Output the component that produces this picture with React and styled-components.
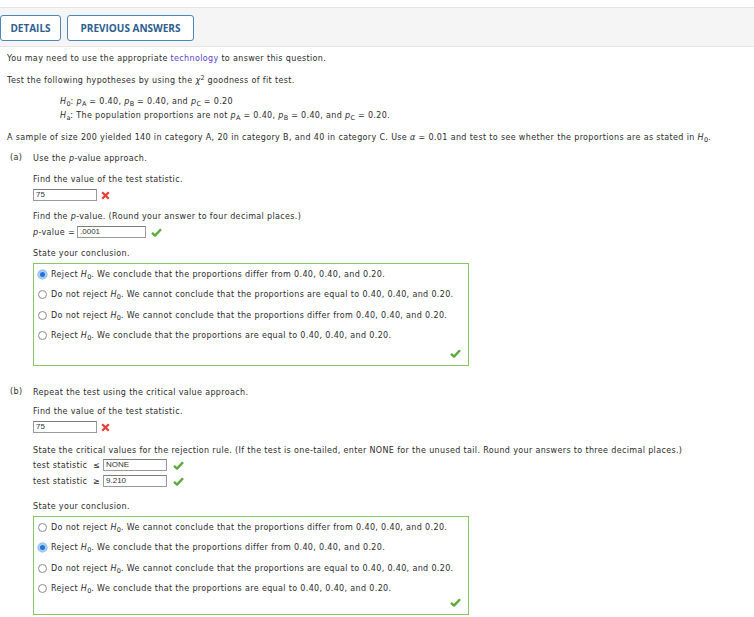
import React from "react";
import styled, { createGlobalStyle } from "styled-components";

const GlobalStyle = createGlobalStyle`
  html, body { margin: 0; padding: 0; background: #fff; }
  body {
    font-family: "DejaVu Sans", Verdana, sans-serif;
    font-size: 8px;
    letter-spacing: 0.35px;
    color: #2b2b2b;
  }
`;

const Page = styled.div`
  width: 754px;
  height: 617px;
  overflow: hidden;
  padding-top: 7px;
  box-sizing: border-box;
`;

const TopBar = styled.div`
  height: 38px;
  background: #f5f5f5;
  border-top: 1px solid #e6e6e6;
  border-bottom: 1px solid #e6e6e6;
  display: flex;
  align-items: center;
  gap: 6px;
  padding-left: 0;
`;

const TabButton = styled.button`
  height: 26px;
  width: ${(p) => p.$w}px;
  background: #fff;
  border: 1px solid #4b87b9;
  border-radius: 3px;
  font-family: "Open Sans", "DejaVu Sans", sans-serif;
  font-weight: 700;
  font-size: 10px;
  letter-spacing: 0;
  color: #2d5e8e;
  padding: 0;
  margin-top: 1px;
`;

const Content = styled.div`
  padding: 5px 0 0 7px;
`;

const Para = styled.div`
  line-height: 14px;
  margin-bottom: ${(p) => (p.$mb !== undefined ? p.$mb : 8)}px;
  padding-left: ${(p) => p.$indent || 0}px;
  white-space: nowrap;
`;

const Link = styled.span`
  color: #5a40c8;
`;

const Var = styled.i`
  font-style: italic;
`;

const Sub = styled.sub`
  font-size: 6.5px;
  vertical-align: -2px;
  line-height: 0;
  letter-spacing: 0;
`;

const Sup = styled.sup`
  font-size: 6.5px;
  vertical-align: 3px;
  line-height: 0;
  letter-spacing: 0;
`;

const Section = styled.div`
  display: grid;
  grid-template-columns: 23px 1fr;
  padding-left: 3px;
  margin-top: ${(p) => p.$mt || 0}px;
`;

const Label = styled.div`
  line-height: 14px;
`;

const Body = styled.div`
  display: flex;
  flex-direction: column;
`;

const Row = styled.div`
  display: flex;
  align-items: center;
  height: 14px;
  margin-bottom: ${(p) => p.$mb || 0}px;
  white-space: nowrap;
`;

const Field = styled.div`
  width: ${(p) => p.$w}px;
  height: 12px;
  box-sizing: border-box;
  border: 1px solid #9a9a9a;
  border-top-color: #7d7d7d;
  background: #fff;
  font-family: "Liberation Sans", Arial, sans-serif;
  font-size: 8px;
  letter-spacing: 0;
  line-height: 10px;
  padding-left: 2px;
  color: #333;
  margin-left: ${(p) => p.$ml || 0}px;
`;

const Mark = styled.span`
  display: inline-flex;
  margin-left: ${(p) => p.$ml || 5}px;
`;

const Box = styled.div`
  width: 436px;
  box-sizing: border-box;
  border: 1.5px solid #8cc563;
  padding: 3px 0 0 4px;
  height: ${(p) => p.$h}px;
  display: flex;
  flex-direction: column;
  position: relative;
`;

const Option = styled.div`
  display: flex;
  align-items: center;
  height: 14px;
  margin-bottom: 6.5px;
  white-space: nowrap;
`;

const Radio = styled.span`
  width: 9px;
  height: 9px;
  box-sizing: border-box;
  border-radius: 50%;
  margin-right: 4px;
  flex: none;
  ${(p) =>
    p.$on
      ? `background: #1f73d9; border: 2px solid #a9cdf3; box-shadow: 0 0 0 0.5px #7aa9dc;`
      : `background: #fff; border: 1px solid #8c8c8c;`}
`;

const BoxCheck = styled.span`
  position: absolute;
  right: 7px;
  bottom: 7px;
  display: inline-flex;
`;

const Check = () => (
  <svg width="11" height="9" viewBox="0 0 11 9">
    <path d="M1 4.8 L4 7.6 L10 1.2" fill="none" stroke="#5aab3a" strokeWidth="2.4" strokeLinejoin="round" />
  </svg>
);

const Cross = () => (
  <svg width="9" height="9" viewBox="0 0 9 9">
    <path d="M1.2 1.2 L7.8 7.8 M7.8 1.2 L1.2 7.8" fill="none" stroke="#e5403a" strokeWidth="2.3" />
  </svg>
);

const H0 = () => (
  <>
    <Var>H</Var>
    <Sub>0</Sub>
  </>
);

const P = ({ s }) => (
  <>
    <Var>p</Var>
    <Sub>{s}</Sub>
  </>
);

const Opt = ({ on, children }) => (
  <Option>
    <Radio $on={on} />
    <span>{children}</span>
  </Option>
);

const RejectDiffer = () => (
  <>
    Reject <H0 />. We conclude that the proportions differ from 0.40, 0.40, and 0.20.
  </>
);
const NotRejectEqual = () => (
  <>
    Do not reject <H0 />. We cannot conclude that the proportions are equal to 0.40, 0.40, and 0.20.
  </>
);
const NotRejectDiffer = () => (
  <>
    Do not reject <H0 />. We cannot conclude that the proportions differ from 0.40, 0.40, and 0.20.
  </>
);
const RejectEqual = () => (
  <>
    Reject <H0 />. We conclude that the proportions are equal to 0.40, 0.40, and 0.20.
  </>
);

export default function App() {
  return (
    <Page>
      <GlobalStyle />
      <TopBar>
        <TabButton $w={61}>DETAILS</TabButton>
        <TabButton $w={127}>PREVIOUS ANSWERS</TabButton>
      </TopBar>
      <Content>
        <Para>
          You may need to use the appropriate <Link>technology</Link> to answer this question.
        </Para>
        <Para $mb={7}>
          Test the following hypotheses by using the <Var>χ</Var>
          <Sup>2</Sup> goodness of fit test.
        </Para>
        <Para $indent={53} $mb={0}>
          <H0 />: <P s="A" /> = 0.40, <P s="B" /> = 0.40, and <P s="C" /> = 0.20
        </Para>
        <Para $indent={53}>
          <Var>H</Var>
          <Sub>a</Sub>: The population proportions are not <P s="A" /> = 0.40, <P s="B" /> = 0.40, and{" "}
          <P s="C" /> = 0.20.
        </Para>
        <Para $mb={6}>
          A sample of size 200 yielded 140 in category A, 20 in category B, and 40 in category C. Use{" "}
          <Var>α</Var> = 0.01 and test to see whether the proportions are as stated in <H0 />.
        </Para>

        <Section>
          <Label>(a)</Label>
          <Body>
            <Row $mb={7}>
              Use the&nbsp;<Var>p</Var>-value approach.
            </Row>
            <Row $mb={2}>Find the value of the test statistic.</Row>
            <Row $mb={7}>
              <Field $w={64}>75</Field>
              <Mark $ml={4}>
                <Cross />
              </Mark>
            </Row>
            <Row $mb={2}>
              Find the&nbsp;<Var>p</Var>-value. (Round your answer to four decimal places.)
            </Row>
            <Row $mb={7}>
              <Var>p</Var>-value =
              <Field $w={69} $ml={2}>.0001</Field>
              <Mark $ml={5}>
                <Check />
              </Mark>
            </Row>
            <Row $mb={3}>State your conclusion.</Row>
            <Box $h={103}>
              <Opt on>
                <RejectDiffer />
              </Opt>
              <Opt>
                <NotRejectEqual />
              </Opt>
              <Opt>
                <NotRejectDiffer />
              </Opt>
              <Opt>
                <RejectEqual />
              </Opt>
              <BoxCheck>
                <Check />
              </BoxCheck>
            </Box>
          </Body>
        </Section>

        <Section $mt={19}>
          <Label>(b)</Label>
          <Body>
            <Row $mb={5}>Repeat the test using the critical value approach.</Row>
            <Row $mb={2}>Find the value of the test statistic.</Row>
            <Row $mb={9}>
              <Field $w={64}>75</Field>
              <Mark $ml={4}>
                <Cross />
              </Mark>
            </Row>
            <Row $mb={1}>
              State the critical values for the rejection rule. (If the test is one-tailed, enter NONE for the unused tail. Round your answers to three decimal places.)
            </Row>
            <Row $mb={2}>
              test statistic&nbsp;&nbsp;≤&nbsp;
              <Field $w={64}>NONE</Field>
              <Mark $ml={6}>
                <Check />
              </Mark>
            </Row>
            <Row $mb={11}>
              test statistic&nbsp;&nbsp;≥&nbsp;
              <Field $w={64}>9.210</Field>
              <Mark $ml={6}>
                <Check />
              </Mark>
            </Row>
            <Row $mb={3}>State your conclusion.</Row>
            <Box $h={99}>
              <Opt>
                <NotRejectDiffer />
              </Opt>
              <Opt on>
                <RejectDiffer />
              </Opt>
              <Opt>
                <NotRejectEqual />
              </Opt>
              <Opt>
                <RejectEqual />
              </Opt>
              <BoxCheck>
                <Check />
              </BoxCheck>
            </Box>
          </Body>
        </Section>
      </Content>
    </Page>
  );
}
